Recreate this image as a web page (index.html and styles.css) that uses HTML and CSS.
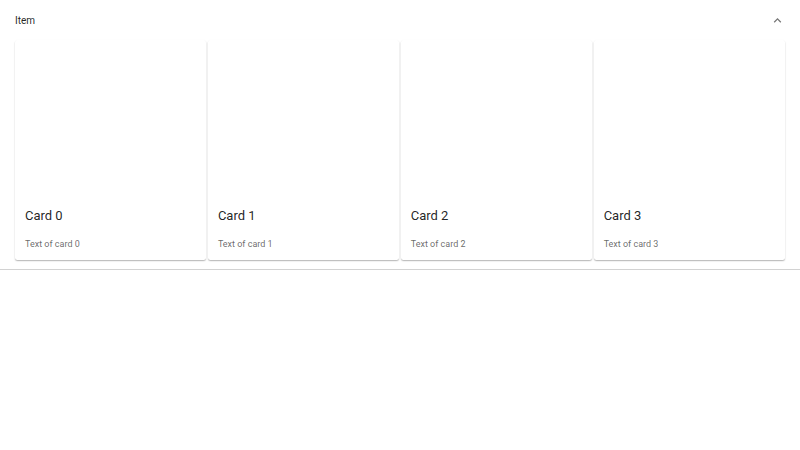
FILE: index.html
```html
<!DOCTYPE html>
<html>
<head>
<meta charset="utf-8">
<link rel="stylesheet" href="styles.css">
</head>
<body>
<div class="accordion">
  <div class="summary">
    <span class="summary-title">Item</span>
    <svg class="chevron" viewBox="0 0 24 24"><path d="M16.59 8.59 12 13.17 7.41 8.59 6 10l6 6 6-6z"/></svg>
  </div>
  <div class="details">
    <div class="card">
      <div class="media"></div>
      <div class="content">
        <div class="title">Card 0</div>
        <div class="text">Text of card 0</div>
      </div>
    </div>
    <div class="card">
      <div class="media"></div>
      <div class="content">
        <div class="title">Card 1</div>
        <div class="text">Text of card 1</div>
      </div>
    </div>
    <div class="card">
      <div class="media"></div>
      <div class="content">
        <div class="title">Card 2</div>
        <div class="text">Text of card 2</div>
      </div>
    </div>
    <div class="card">
      <div class="media"></div>
      <div class="content">
        <div class="title">Card 3</div>
        <div class="text">Text of card 3</div>
      </div>
    </div>
  </div>
</div>
</body>
</html>
```
FILE: styles.css
```css
html, body {
  margin: 0;
  padding: 0;
  background: #fff;
  font-family: Roboto, "Liberation Sans", sans-serif;
}
.accordion {
  background: #fff;
  border-bottom: 1px solid #d2d2d2;
  box-shadow: 0 1px 2px 0 rgba(0,0,0,0.12);
  padding-bottom: 9px;
}
.summary {
  height: 40px;
  display: flex;
  align-items: center;
  justify-content: space-between;
  padding: 0 15px 0 15px;
}
.summary-title {
  font-size: 10px;
  color: rgba(0,0,0,0.87);
}
.chevron {
  width: 15px;
  height: 15px;
  fill: rgba(0,0,0,0.54);
  transform: rotate(180deg);
}
.details {
  display: grid;
  grid-template-columns: repeat(4, 1fr);
  gap: 1.5px;
  padding: 0 15px;
}
.card {
  background: #fff;
  border-radius: 2.5px;
  box-shadow: 0 1px 2px -1px rgba(0,0,0,0.2), 0 1px 1px 0 rgba(0,0,0,0.14), 0 1px 2px 0 rgba(0,0,0,0.12);
  height: 220px;
  display: flex;
  flex-direction: column;
}
.media {
  height: 156px;
}
.content {
  padding: 10px;
}
.title {
  font-size: 13px;
  font-weight: 400;
  line-height: 20px;
  color: rgba(0,0,0,0.87);
  margin-bottom: 12px;
}
.text {
  font-size: 9px;
  line-height: 12.5px;
  color: rgba(0,0,0,0.6);
}
```
